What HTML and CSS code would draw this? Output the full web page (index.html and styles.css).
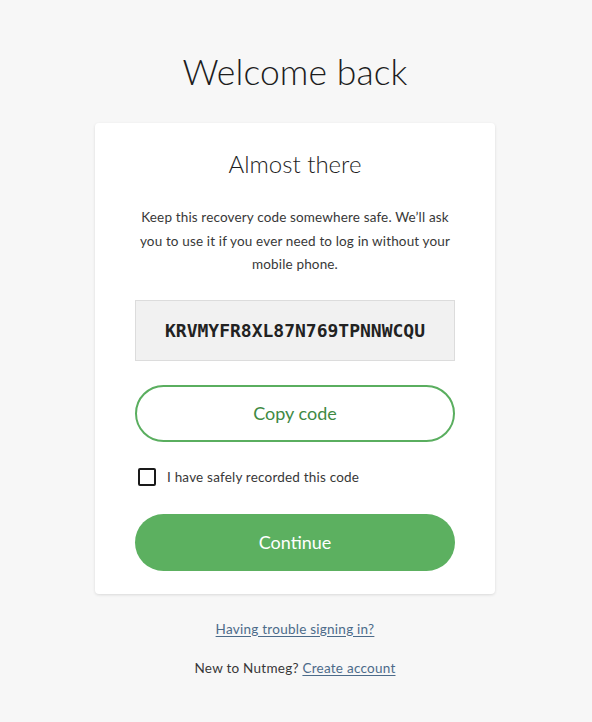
FILE: index.html
```html
<!DOCTYPE html>
<html lang="en">
<head>
<meta charset="utf-8">
<title>Welcome back</title>
<link rel="stylesheet" href="styles.css">
</head>
<body>
<main class="page">
  <h1 class="title">Welcome back</h1>
  <section class="card">
    <h2 class="card-title">Almost there</h2>
    <p class="intro">Keep this recovery code somewhere safe. We’ll ask you to use it if you ever need to log in without your mobile phone.</p>
    <div class="code">KRVMYFR8XL87N769TPNNWCQU</div>
    <button class="btn btn-outline" type="button">Copy code</button>
    <label class="check">
      <input type="checkbox" class="check-input">
      <span class="check-box"></span>
      <span class="check-label">I have safely recorded this code</span>
    </label>
    <button class="btn btn-primary" type="button">Continue</button>
  </section>
  <a class="link trouble" href="#">Having trouble signing in?</a>
  <p class="signup">New to Nutmeg? <a class="link" href="#">Create account</a></p>
</main>
</body>
</html>
```
FILE: styles.css
```css
* { box-sizing: border-box; }
html, body { margin: 0; padding: 0; }
body {
  background: #f7f7f7;
  font-family: "Lato", "Noto Sans", sans-serif;
  color: #222;
}
.page {
  display: flex;
  flex-direction: column;
  align-items: center;
  padding-top: 49px;
  padding-right: 2px;
}
.title {
  margin: 0;
  font-size: 35.5px;
  font-weight: 300;
  line-height: 46px;
  color: #1d1d1d;
  letter-spacing: 0.1px;
}
.card {
  margin-top: 28px;
  width: 400px;
  background: #fff;
  border-radius: 4px;
  box-shadow: 0 1px 3px rgba(0,0,0,0.12);
  padding: 26px 40px 23px;
  display: flex;
  flex-direction: column;
  align-items: center;
}
.card-title {
  margin: 0;
  font-size: 24px;
  font-weight: 300;
  line-height: 30px;
  color: #1d1d1d;
}
.intro {
  margin: 27px 0 0;
  width: 312px;
  font-size: 13.5px;
  letter-spacing: 0.15px;
  line-height: 23.5px;
  text-align: center;
  color: #383838;
  font-weight: 400;
}
.code {
  margin-top: 23px;
  width: 320px;
  height: 61px;
  background: #f1f1f1;
  border: 1px solid #dcdcdc;
  display: flex;
  align-items: center;
  justify-content: center;
  font-family: "DejaVu Sans Mono", "Liberation Mono", monospace;
  font-weight: 700;
  font-size: 18px;
  color: #222;
}
.btn {
  width: 320px;
  height: 57px;
  border-radius: 29px;
  font-family: inherit;
  font-size: 18px;
  font-weight: 400;
  cursor: pointer;
}
.btn-outline {
  margin-top: 24px;
  background: #fff;
  border: 2px solid #5aae5f;
  color: #3f8a44;
}
.check {
  margin-top: 26px;
  align-self: stretch;
  display: flex;
  align-items: center;
  gap: 11px;
  padding-left: 3px;
  cursor: pointer;
}
.check-input { position: absolute; opacity: 0; width: 0; height: 0; }
.check-box {
  width: 18px;
  height: 18px;
  border: 2px solid #1a1a1a;
  border-radius: 2px;
  flex: none;
}
.check-label {
  font-size: 13.5px;
  letter-spacing: 0.2px;
  color: #383838;
}
.btn-primary {
  margin-top: 28px;
  background: #5cb060;
  border: none;
  color: #fff;
}
.link {
  color: #4c6b8a;
  text-decoration: underline;
  text-underline-offset: 2px;
  font-size: 13.5px;
  letter-spacing: 0.25px;
}
.trouble {
  margin-top: 27px;
  line-height: 16px;
}
.signup {
  margin: 23px 0 0;
  font-size: 13.5px;
  letter-spacing: 0.25px;
  color: #383838;
  line-height: 16px;
}
```
